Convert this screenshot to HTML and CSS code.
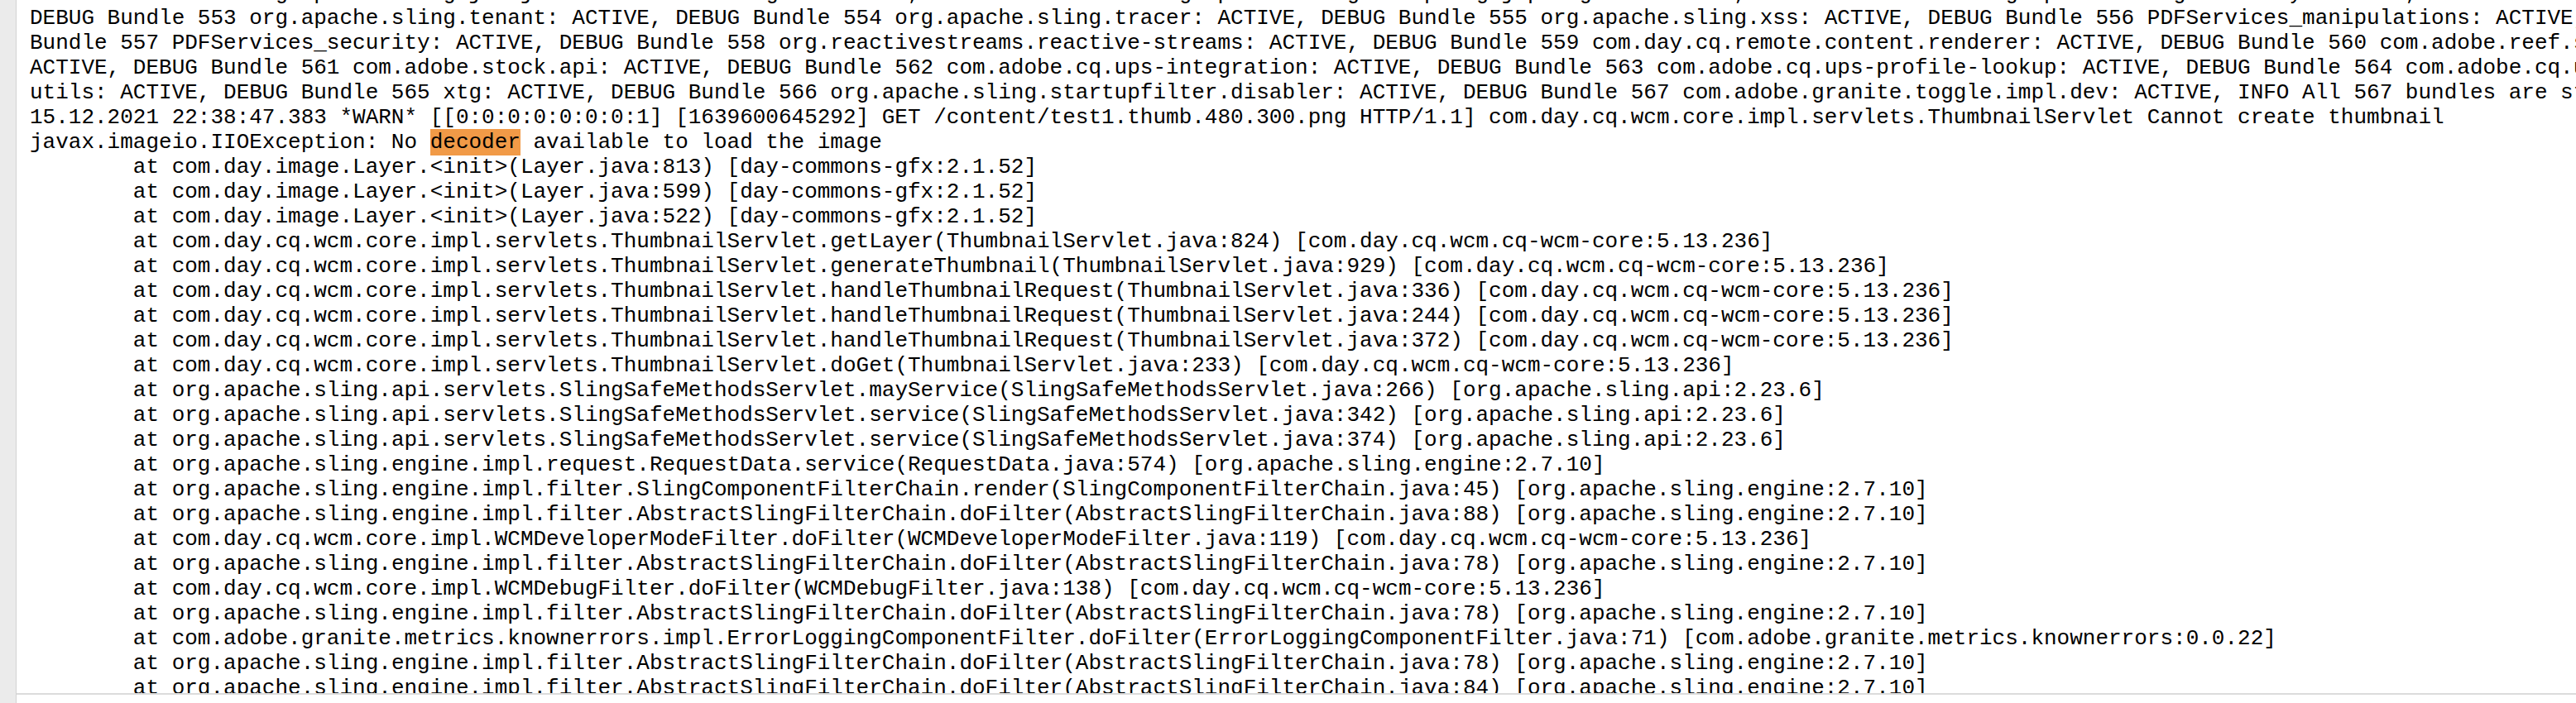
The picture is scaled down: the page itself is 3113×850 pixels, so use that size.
FILE: index.html
```html
<!DOCTYPE html>
<html>
<head>
<meta charset="utf-8">
<title>error.log</title>
<link rel="stylesheet" href="styles.css">
</head>
<body>
<div class="window">
  <div class="gutter"></div>
  <div class="main">
    <div class="viewport">
<pre class="log">DEBUG Bundle 549 org.apache.sling.jcr.jackrabbit.usermanager: ACTIVE, DEBUG Bundle 550 org.apache.sling.scripting.jsp.taglib: ACTIVE, DEBUG Bundle 551 org.apache.sling.security: ACTIVE, DEBUG Bundle 552 com.day.cq.dam.cq-dam-api: ACTIVE,
DEBUG Bundle 553 org.apache.sling.tenant: ACTIVE, DEBUG Bundle 554 org.apache.sling.tracer: ACTIVE, DEBUG Bundle 555 org.apache.sling.xss: ACTIVE, DEBUG Bundle 556 PDFServices_manipulations: ACTIVE, DEBUG
Bundle 557 PDFServices_security: ACTIVE, DEBUG Bundle 558 org.reactivestreams.reactive-streams: ACTIVE, DEBUG Bundle 559 com.day.cq.remote.content.renderer: ACTIVE, DEBUG Bundle 560 com.adobe.reef.siren: ACTIVE,
ACTIVE, DEBUG Bundle 561 com.adobe.stock.api: ACTIVE, DEBUG Bundle 562 com.adobe.cq.ups-integration: ACTIVE, DEBUG Bundle 563 com.adobe.cq.ups-profile-lookup: ACTIVE, DEBUG Bundle 564 com.adobe.cq.upgrades-
utils: ACTIVE, DEBUG Bundle 565 xtg: ACTIVE, DEBUG Bundle 566 org.apache.sling.startupfilter.disabler: ACTIVE, DEBUG Bundle 567 com.adobe.granite.toggle.impl.dev: ACTIVE, INFO All 567 bundles are started
15.12.2021 22:38:47.383 *WARN* [[0:0:0:0:0:0:0:1] [1639600645292] GET /content/test1.thumb.480.300.png HTTP/1.1] com.day.cq.wcm.core.impl.servlets.ThumbnailServlet Cannot create thumbnail
javax.imageio.IIOException: No <mark class="find-hit">decoder</mark> available to load the image
	at com.day.image.Layer.&lt;init&gt;(Layer.java:813) [day-commons-gfx:2.1.52]
	at com.day.image.Layer.&lt;init&gt;(Layer.java:599) [day-commons-gfx:2.1.52]
	at com.day.image.Layer.&lt;init&gt;(Layer.java:522) [day-commons-gfx:2.1.52]
	at com.day.cq.wcm.core.impl.servlets.ThumbnailServlet.getLayer(ThumbnailServlet.java:824) [com.day.cq.wcm.cq-wcm-core:5.13.236]
	at com.day.cq.wcm.core.impl.servlets.ThumbnailServlet.generateThumbnail(ThumbnailServlet.java:929) [com.day.cq.wcm.cq-wcm-core:5.13.236]
	at com.day.cq.wcm.core.impl.servlets.ThumbnailServlet.handleThumbnailRequest(ThumbnailServlet.java:336) [com.day.cq.wcm.cq-wcm-core:5.13.236]
	at com.day.cq.wcm.core.impl.servlets.ThumbnailServlet.handleThumbnailRequest(ThumbnailServlet.java:244) [com.day.cq.wcm.cq-wcm-core:5.13.236]
	at com.day.cq.wcm.core.impl.servlets.ThumbnailServlet.handleThumbnailRequest(ThumbnailServlet.java:372) [com.day.cq.wcm.cq-wcm-core:5.13.236]
	at com.day.cq.wcm.core.impl.servlets.ThumbnailServlet.doGet(ThumbnailServlet.java:233) [com.day.cq.wcm.cq-wcm-core:5.13.236]
	at org.apache.sling.api.servlets.SlingSafeMethodsServlet.mayService(SlingSafeMethodsServlet.java:266) [org.apache.sling.api:2.23.6]
	at org.apache.sling.api.servlets.SlingSafeMethodsServlet.service(SlingSafeMethodsServlet.java:342) [org.apache.sling.api:2.23.6]
	at org.apache.sling.api.servlets.SlingSafeMethodsServlet.service(SlingSafeMethodsServlet.java:374) [org.apache.sling.api:2.23.6]
	at org.apache.sling.engine.impl.request.RequestData.service(RequestData.java:574) [org.apache.sling.engine:2.7.10]
	at org.apache.sling.engine.impl.filter.SlingComponentFilterChain.render(SlingComponentFilterChain.java:45) [org.apache.sling.engine:2.7.10]
	at org.apache.sling.engine.impl.filter.AbstractSlingFilterChain.doFilter(AbstractSlingFilterChain.java:88) [org.apache.sling.engine:2.7.10]
	at com.day.cq.wcm.core.impl.WCMDeveloperModeFilter.doFilter(WCMDeveloperModeFilter.java:119) [com.day.cq.wcm.cq-wcm-core:5.13.236]
	at org.apache.sling.engine.impl.filter.AbstractSlingFilterChain.doFilter(AbstractSlingFilterChain.java:78) [org.apache.sling.engine:2.7.10]
	at com.day.cq.wcm.core.impl.WCMDebugFilter.doFilter(WCMDebugFilter.java:138) [com.day.cq.wcm.cq-wcm-core:5.13.236]
	at org.apache.sling.engine.impl.filter.AbstractSlingFilterChain.doFilter(AbstractSlingFilterChain.java:78) [org.apache.sling.engine:2.7.10]
	at com.adobe.granite.metrics.knownerrors.impl.ErrorLoggingComponentFilter.doFilter(ErrorLoggingComponentFilter.java:71) [com.adobe.granite.metrics.knownerrors:0.0.22]
	at org.apache.sling.engine.impl.filter.AbstractSlingFilterChain.doFilter(AbstractSlingFilterChain.java:78) [org.apache.sling.engine:2.7.10]
	at org.apache.sling.engine.impl.filter.AbstractSlingFilterChain.doFilter(AbstractSlingFilterChain.java:84) [org.apache.sling.engine:2.7.10]
	at org.apache.sling.engine.impl.SlingRequestProcessorImpl.processComponent(SlingRequestProcessorImpl.java:282) [org.apache.sling.engine:2.7.10]</pre>
    </div>
    <div class="hbar"></div>
  </div>
</div>
</body>
</html>
```

FILE: styles.css
```css
html, body {
  margin: 0;
  padding: 0;
  background: #ffffff;
}

.window {
  display: flex;
  width: 3113px;
  height: 850px;
  overflow: hidden;
}

.gutter {
  width: 19px;
  flex: none;
  background: #ebebeb;
  border-right: 1px solid #d2d2d2;
}

.main {
  flex: 1;
  display: flex;
  flex-direction: column;
  min-width: 0;
}

.viewport {
  flex: 1;
  overflow: hidden;
  padding-left: 16px;
}

.log {
  margin: -23px 0 0 0;
  font-family: "Liberation Mono", "Courier New", monospace;
  font-size: 26px;
  line-height: 30px;
  color: #000000;
  white-space: pre;
  tab-size: 8;
  -moz-tab-size: 8;
}

.find-hit {
  background: #f19a47;
  color: #000000;
  padding: 1px 0;
}

.hbar {
  flex: none;
  height: 10px;
  border-top: 2px solid #dcdcdc;
  background: #ffffff;
}
```
